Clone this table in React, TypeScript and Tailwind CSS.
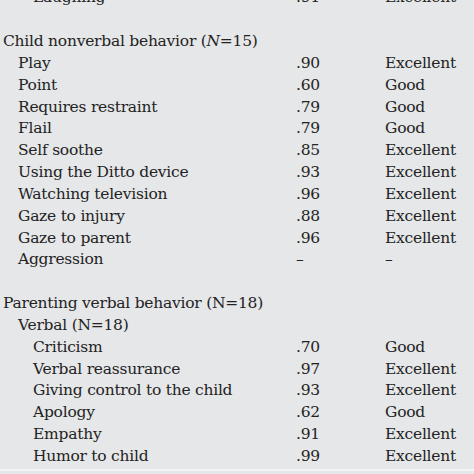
type Row = { label: string; level: number; value?: string; rating?: string; header?: React.ReactNode };

import React from "react";

const rows: Row[] = [
  { label: "Laughing", level: 2, value: ".91", rating: "Excellent" },
  { label: "", level: 0 },
  { label: "", level: 0, header: <>Child nonverbal behavior (<i>N</i>=15)</> },
  { label: "Play", level: 1, value: ".90", rating: "Excellent" },
  { label: "Point", level: 1, value: ".60", rating: "Good" },
  { label: "Requires restraint", level: 1, value: ".79", rating: "Good" },
  { label: "Flail", level: 1, value: ".79", rating: "Good" },
  { label: "Self soothe", level: 1, value: ".85", rating: "Excellent" },
  { label: "Using the Ditto device", level: 1, value: ".93", rating: "Excellent" },
  { label: "Watching television", level: 1, value: ".96", rating: "Excellent" },
  { label: "Gaze to injury", level: 1, value: ".88", rating: "Excellent" },
  { label: "Gaze to parent", level: 1, value: ".96", rating: "Excellent" },
  { label: "Aggression", level: 1, value: "–", rating: "–" },
  { label: "", level: 0 },
  { label: "", level: 0, header: <>Parenting verbal behavior (N=18)</> },
  { label: "Verbal (N=18)", level: 1 },
  { label: "Criticism", level: 2, value: ".70", rating: "Good" },
  { label: "Verbal reassurance", level: 2, value: ".97", rating: "Excellent" },
  { label: "Giving control to the child", level: 2, value: ".93", rating: "Excellent" },
  { label: "Apology", level: 2, value: ".62", rating: "Good" },
  { label: "Empathy", level: 2, value: ".91", rating: "Excellent" },
  { label: "Humor to child", level: 2, value: ".99", rating: "Excellent" },
];

const indent = ["pl-[3px]", "pl-[18px]", "pl-[33px]"];

export default function App() {
  return (
    <div className="w-[474px] h-[474px] overflow-hidden bg-[#e6e7e9] text-[#232323] font-['DejaVu_Serif',serif] text-[15.5px] tracking-[-0.25px]">
      <div className="-mt-[13px]">
        {rows.map((r, i) => (
          <div key={i} className="h-[21.85px] flex items-center whitespace-nowrap">
            {r.header ? (
              <div className="pl-[3px]">{r.header}</div>
            ) : (
              <>
                <div className={`w-[296px] ${indent[r.level]}`}>{r.label}</div>
                <div className="w-[89px]">{r.value}</div>
                <div>{r.rating}</div>
              </>
            )}
          </div>
        ))}
        <div className="mt-[1px] h-[2px] bg-[#f4f4f5]" />
      </div>
    </div>
  );
}
